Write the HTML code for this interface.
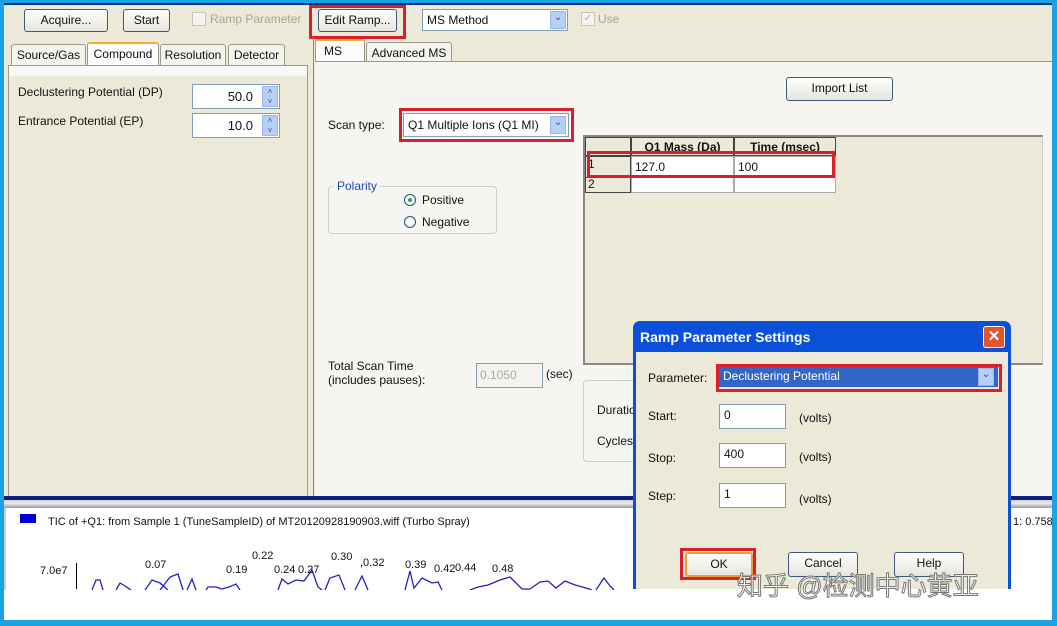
<!DOCTYPE html>
<html><head><meta charset="utf-8"><style>
*{box-sizing:border-box;margin:0;padding:0}
body{width:1057px;height:626px;overflow:hidden;background:#1aa3e2;font-family:"Liberation Sans",sans-serif;font-size:12px;color:#111;position:relative}
.a{position:absolute}
.btn{position:absolute;background:linear-gradient(#fff,#e6e4dc);border:1px solid #3c5a7e;border-radius:3px;text-align:center;font-size:12px;line-height:20px}
.red{position:absolute;border:3px solid #d8202c}
.inp{position:absolute;background:#fff;border:1px solid #7f9db9}
.tab{position:absolute;background:#f4f3ee;border:1px solid #9a9a8a;border-bottom:none;border-radius:3px 3px 0 0;text-align:center;font-size:12px;line-height:20px}
.dd{position:absolute;width:16px;background:#b8cff5;border:1px solid #9bb5e6;color:#3a4f86;font-size:10px;text-align:center}
</style></head><body>
<div class="a" style="left:4px;top:3px;width:1048px;height:617px;background:#fff;border-top:2px solid #102c8c"></div>
<div class="a" style="left:4px;top:5px;width:1048px;height:493px;background:#ece9d8"></div>
<!-- toolbar -->
<div class="btn" style="left:24px;top:9px;width:84px;height:23px">Acquire...</div>
<div class="btn" style="left:123px;top:9px;width:47px;height:23px">Start</div>
<div class="a" style="left:192px;top:12px;width:14px;height:14px;border:1px solid #c8c6b8;background:#f5f4ee"></div>
<div class="a" style="left:210px;top:12px;color:#a8a69a">Ramp Parameter</div>
<div class="btn" style="left:318px;top:9px;width:79px;height:23px">Edit Ramp...</div>
<div class="red" style="left:309px;top:5px;width:97px;height:34px"></div>
<div class="inp" style="left:422px;top:9px;width:146px;height:22px;padding:3px 4px">MS Method</div>
<div class="dd" style="left:550px;top:11px;height:18px">&#8964;</div>
<div class="a" style="left:581px;top:12px;width:14px;height:14px;border:1px solid #c8c6b8;background:#f5f4ee;color:#aaa;font-size:10px;line-height:12px;text-align:center">✓</div>
<div class="a" style="left:598px;top:12px;color:#a8a69a">Use</div>
<!-- left tabs -->
<div class="tab" style="left:11px;top:44px;width:75px;height:22px">Source/Gas</div>
<div class="tab" style="left:87px;top:42px;width:72px;height:24px;background:#fcfcfe;border-top:2px solid #f0b030">Compound</div>
<div class="tab" style="left:160px;top:44px;width:66px;height:22px">Resolution</div>
<div class="tab" style="left:228px;top:44px;width:57px;height:22px">Detector</div>
<div class="a" style="left:8px;top:65px;width:300px;height:433px;background:#f8f8f6;border:1px solid #9a9a8a"></div>
<div class="a" style="left:9px;top:76px;width:298px;height:422px;background:#ece9d8"></div>
<div class="a" style="left:18px;top:85px">Declustering Potential (DP)</div>
<div class="a" style="left:18px;top:114px">Entrance Potential (EP)</div>
<div class="inp" style="left:192px;top:84px;width:88px;height:25px;text-align:right;padding:4px 26px 0 0;font-size:13px">50.0</div>
<div class="dd" style="left:262px;top:86px;height:21px;font-size:8px;line-height:10px">˄<br>˅</div>
<div class="inp" style="left:192px;top:113px;width:88px;height:25px;text-align:right;padding:4px 26px 0 0;font-size:13px">10.0</div>
<div class="dd" style="left:262px;top:115px;height:21px;font-size:8px;line-height:10px">˄<br>˅</div>
<!-- right tabs -->
<div class="a" style="left:313px;top:37px;width:739px;height:461px;border-left:1px solid #888"></div>
<div class="tab" style="left:315px;top:39px;width:50px;height:23px;background:#fcfcfe;border-top:2px solid #f0b030;text-align:left;padding-left:8px">MS</div>
<div class="tab" style="left:366px;top:42px;width:86px;height:20px">Advanced MS</div>
<div class="a" style="left:315px;top:61px;width:737px;height:437px;background:#f6f5f1;border-top:1px solid #9a9a8a"></div>
<div class="btn" style="left:786px;top:77px;width:107px;height:24px">Import List</div>
<div class="a" style="left:328px;top:118px">Scan type:</div>
<div class="inp" style="left:403px;top:113px;width:166px;height:24px;padding:4px">Q1 Multiple Ions (Q1 MI)</div>
<div class="dd" style="left:550px;top:116px;height:18px">&#8964;</div>
<div class="red" style="left:399px;top:108px;width:175px;height:34px"></div>
<div class="a" style="left:328px;top:186px;width:169px;height:48px;border:1px solid #d0d0bf;border-radius:4px"></div>
<div class="a" style="left:334px;top:179px;background:#f6f5f1;color:#1c4fb4;padding:0 3px">Polarity</div>
<div class="a" style="left:404px;top:194px;width:12px;height:12px;border:1px solid #1c5180;border-radius:50%;background:#fff"><div class="a" style="left:3px;top:3px;width:4px;height:4px;border-radius:50%;background:#2aa83a"></div></div>
<div class="a" style="left:422px;top:193px">Positive</div>
<div class="a" style="left:404px;top:216px;width:12px;height:12px;border:1px solid #1c5180;border-radius:50%;background:#fff"></div>
<div class="a" style="left:422px;top:215px">Negative</div>
<!-- grid -->
<div class="a" style="left:583px;top:135px;width:460px;height:230px;background:#ece9d8;border:2px solid #888;border-right:1px solid #ccc"></div>
<div class="a" style="left:585px;top:137px;width:46px;height:19px;border:1px solid #444;background:#ece9d8"></div>
<div class="a" style="left:631px;top:137px;width:103px;height:19px;border:1px solid #444;text-align:center;font-weight:bold;line-height:18px">Q1 Mass (Da)</div>
<div class="a" style="left:734px;top:137px;width:102px;height:19px;border:1px solid #444;text-align:center;font-weight:bold;line-height:18px">Time (msec)</div>
<div class="a" style="left:585px;top:156px;width:46px;height:22px;border:1px solid #444;background:#ece9d8;padding-left:2px">1</div>
<div class="a" style="left:631px;top:156px;width:103px;height:22px;background:#fff;border:1px solid #aaa;padding:3px">127.0</div>
<div class="a" style="left:734px;top:156px;width:102px;height:22px;background:#fff;border:1px solid #aaa;padding:3px">100</div>
<div class="a" style="left:585px;top:178px;width:46px;height:15px;border:1px solid #444;border-top:none;background:#ece9d8;padding-left:2px;line-height:13px">2</div>
<div class="a" style="left:631px;top:178px;width:103px;height:15px;background:#fff;border:1px solid #aaa;border-top:none"></div>
<div class="a" style="left:734px;top:178px;width:102px;height:15px;background:#fff;border:1px solid #aaa;border-top:none"></div>
<div class="red" style="left:587px;top:151px;width:248px;height:27px"></div>
<div class="a" style="left:328px;top:359px;line-height:14px">Total Scan Time<br>(includes pauses):</div>
<div class="inp" style="left:476px;top:363px;width:67px;height:25px;background:#f4f3ee;color:#aaa;padding:4px 3px">0.1050</div>
<div class="a" style="left:546px;top:367px">(sec)</div>
<div class="a" style="left:583px;top:380px;width:60px;height:82px;border:1px solid #d0d0bf;border-radius:4px"></div>
<div class="a" style="left:597px;top:403px">Duratio</div>
<div class="a" style="left:597px;top:434px">Cycles</div>
<!-- bottom bar -->
<div class="a" style="left:4px;top:496px;width:1048px;height:4px;background:#0e1e7e"></div>
<div class="a" style="left:4px;top:500px;width:1048px;height:8px;background:linear-gradient(#ccc,#eee 40%,#999)"></div>
<div class="a" style="left:4px;top:508px;width:1048px;height:82px;background:#fff;border-left:2px solid #ccc"></div>
<div class="a" style="left:20px;top:514px;width:16px;height:9px;background:#0000d8"></div>
<div class="a" style="left:48px;top:516px;font-size:11px">TIC of +Q1: from Sample 1 (TuneSampleID) of MT20120928190903.wiff (Turbo Spray)</div>
<div class="a" style="left:1013px;top:516px;font-size:11px">1: 0.758</div>
<div class="a" style="left:40px;top:565px;font-size:11px">7.0e7</div>
<div class="a" style="left:76px;top:563px;width:1px;height:26px;background:#000"></div>
<svg class="a" style="left:0;top:550px" width="640" height="40"><polyline fill="none" stroke="#2020c0" stroke-width="1.3" points="92,40 96,30 100,30 103,40 M0,0" /><polyline fill="none" stroke="#2020c0" stroke-width="1.3" points="116,40 120,33 125,36 131,40"/><polyline fill="none" stroke="#2020c0" stroke-width="1.3" points="145,40 152,30 160,33 168,40"/><polyline fill="none" stroke="#2020c0" stroke-width="1.3" points="160,40 170,27 178,24 183,40"/><polyline fill="none" stroke="#2020c0" stroke-width="1.3" points="187,40 192,29 196,40"/><polyline fill="none" stroke="#2020c0" stroke-width="1.3" points="206,40 208,37 216,37 222,39 229,37 236,34 240,40"/><polyline fill="none" stroke="#2020c0" stroke-width="1.3" points="278,40 282,29 288,34 296,30 304,31 312,20 318,37 322,40"/><polyline fill="none" stroke="#2020c0" stroke-width="1.3" points="325,40 330,28 339,25 345,40"/><polyline fill="none" stroke="#2020c0" stroke-width="1.3" points="355,40 362,26 368,40"/><polyline fill="none" stroke="#2020c0" stroke-width="1.3" points="405,40 410,21 414,38 422,28 432,33 438,32 442,40"/><polyline fill="none" stroke="#2020c0" stroke-width="1.3" points="470,40 478,37 488,35 500,30 510,27 522,39 530,39 540,32 548,31 556,38 565,31 575,35 586,38 592,40"/><polyline fill="none" stroke="#2020c0" stroke-width="1.3" points="596,40 604,28 610,36 614,40"/></svg>
<div class="a" style="left:145px;top:559px;font-size:11px">0.07</div>
<div class="a" style="left:226px;top:564px;font-size:11px">0.19</div>
<div class="a" style="left:252px;top:550px;font-size:11px">0.22</div>
<div class="a" style="left:274px;top:564px;font-size:11px">0.24</div>
<div class="a" style="left:298px;top:564px;font-size:11px">0.27</div>
<div class="a" style="left:331px;top:551px;font-size:11px">0.30</div>
<div class="a" style="left:360px;top:557px;font-size:11px">,0.32</div>
<div class="a" style="left:405px;top:559px;font-size:11px">0.39</div>
<div class="a" style="left:434px;top:563px;font-size:11px">0.42</div>
<div class="a" style="left:455px;top:562px;font-size:11px">0.44</div>
<div class="a" style="left:492px;top:563px;font-size:11px">0.48</div>
<div class="a" style="left:4px;top:590px;width:1048px;height:30px;background:#fff"></div>
<!-- dialog -->
<div class="a" style="left:633px;top:321px;width:378px;height:268px;background:#0a50d8;border-radius:7px 7px 0 0"></div>
<div class="a" style="left:636px;top:352px;width:372px;height:237px;background:#ece9d8"></div>
<div class="a" style="left:640px;top:329px;color:#fff;font-weight:bold;font-size:14px">Ramp Parameter Settings</div>
<div class="a" style="left:983px;top:326px;width:22px;height:22px;background:#e0542e;border:1px solid #fff;border-radius:3px;color:#fff;font-weight:bold;text-align:center;line-height:20px;font-size:15px">✕</div>
<div class="a" style="left:648px;top:371px">Parameter:</div>
<div class="a" style="left:719px;top:367px;width:279px;height:20px;background:#3166c8;color:#fff;padding:2px 4px">Declustering Potential</div>
<div class="dd" style="left:978px;top:368px;height:18px">&#8964;</div>
<div class="red" style="left:716px;top:364px;width:286px;height:28px"></div>
<div class="a" style="left:648px;top:409px">Start:</div>
<div class="inp" style="left:719px;top:404px;width:67px;height:25px;padding:3px 4px">0</div>
<div class="a" style="left:799px;top:411px">(volts)</div>
<div class="a" style="left:648px;top:451px">Stop:</div>
<div class="inp" style="left:719px;top:443px;width:67px;height:25px;padding:3px 4px">400</div>
<div class="a" style="left:799px;top:450px">(volts)</div>
<div class="a" style="left:648px;top:489px">Step:</div>
<div class="inp" style="left:719px;top:483px;width:67px;height:25px;padding:3px 4px">1</div>
<div class="a" style="left:799px;top:492px">(volts)</div>
<div class="btn" style="left:685px;top:552px;width:68px;height:25px;border:2px solid #e8a030;line-height:21px">OK</div>
<div class="red" style="left:680px;top:548px;width:76px;height:32px"></div>
<div class="btn" style="left:788px;top:552px;width:70px;height:25px">Cancel</div>
<div class="btn" style="left:894px;top:552px;width:70px;height:25px">Help</div>
<div class="a" style="left:737px;top:566px;font-size:26px;color:rgba(255,255,255,0.85);-webkit-text-stroke:1px #777;font-family:'Liberation Sans','Noto Sans CJK SC',sans-serif">知乎 @检测中心黄亚</div>
</body></html>
